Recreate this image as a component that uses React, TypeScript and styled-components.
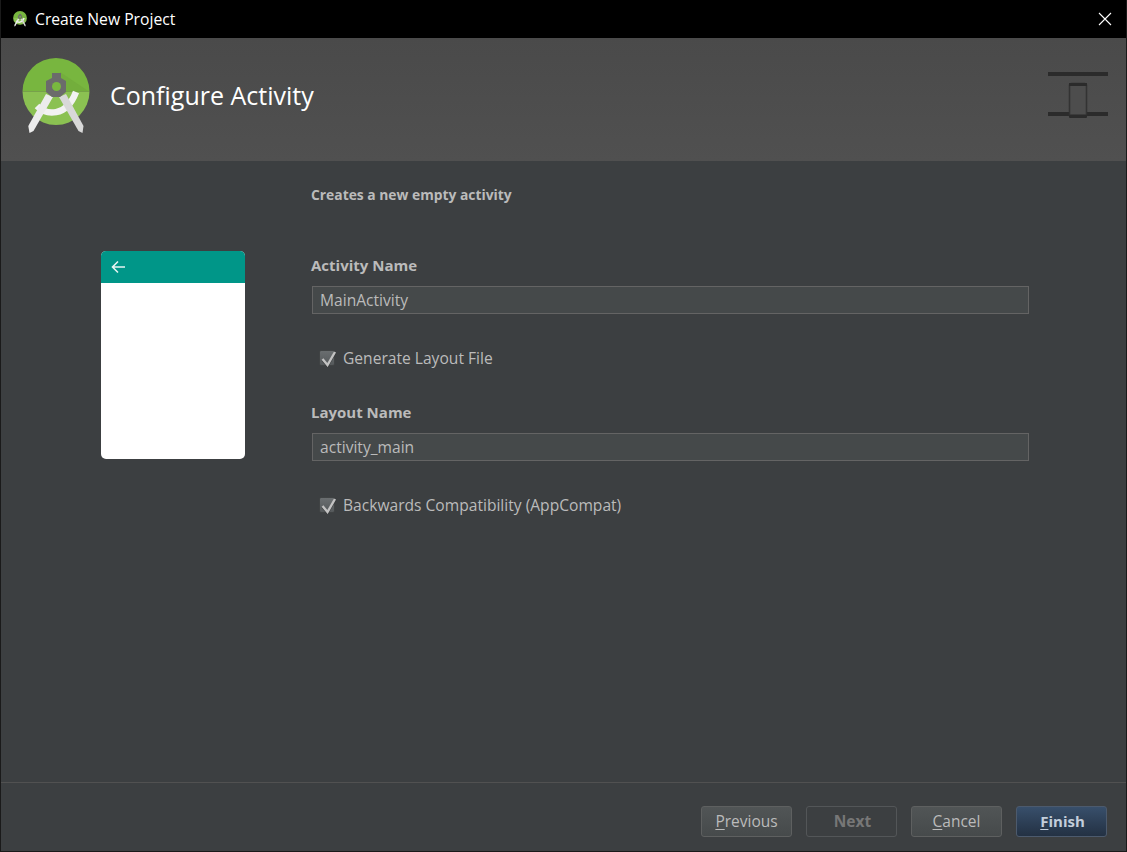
import styled, { createGlobalStyle } from "styled-components";

const Global = createGlobalStyle`
  html, body { margin: 0; padding: 0; background: #3c3f41; }
  body { font-family: "Open Sans", "Noto Sans", sans-serif; }
`;

const Frame = styled.div`
  width: 1127px;
  height: 852px;
  box-sizing: border-box;
  border: 1px solid #1a1a1a;
  border-top: 0;
  display: flex;
  flex-direction: column;
  background: #3c3f41;
  overflow: hidden;
`;

const TitleBar = styled.div`
  height: 38px;
  flex: none;
  background: #000;
  display: flex;
  align-items: center;
  padding: 0 14px 0 12px;
  color: #fff;
  font-size: 15.7px;
`;

const TitleText = styled.span`
  margin-left: 8px;
  flex: 1;
`;

const Header = styled.div`
  height: 123px;
  flex: none;
  background: linear-gradient(180deg, #4a4a4a 0%, #505050 100%);
  display: flex;
  align-items: center;
  padding: 0 18px 10px 21px;
  box-sizing: border-box;
`;

const HeaderLogo = styled.div`
  display: flex;
  margin-top: 3px;
`;

const HeaderTitle = styled.h1`
  margin: 0 0 0 20px;
  flex: 1;
  font-size: 25px;
  font-weight: 400;
  color: #fff;
`;

const Content = styled.div`
  flex: 1;
  display: flex;
  min-height: 0;
`;

const PreviewColumn = styled.div`
  width: 310px;
  flex: none;
  padding: 90px 0 0 100px;
  box-sizing: border-box;
`;

const Phone = styled.div`
  width: 144px;
  height: 208px;
  background: #fff;
  border-radius: 5px;
  overflow: hidden;
`;

const AppBar = styled.div`
  height: 32px;
  background: #009688;
  display: flex;
  align-items: center;
  padding-left: 9px;
`;

const FormColumn = styled.div`
  width: 718px;
  flex: none;
  color: #bbbbbb;
  font-size: 15.6px;
  padding-top: 23px;
`;

const Description = styled.div`
  font-size: 13.85px;
  font-weight: 700;
  line-height: 22px;
  margin-bottom: 48px;
`;

const FieldLabel = styled.div`
  font-size: 15px;
  font-weight: 700;
  line-height: 22px;
  margin-bottom: 10px;
`;

const TextField = styled.div`
  height: 28px;
  box-sizing: border-box;
  margin-left: 1px;
  border: 1px solid #646464;
  background: #45494a;
  padding-left: 7px;
  line-height: 26px;
  color: #bbbbbb;
`;

const CheckRow = styled.div`
  display: flex;
  align-items: center;
  height: 22px;
  margin: 33px 0 32px 8px;
`;

const Box = styled.span`
  width: 16px;
  height: 16px;
  flex: none;
  box-sizing: border-box;
  border: 1px solid #404344;
  border-radius: 2px;
  background: linear-gradient(180deg, #6a6e70, #55595b);
  position: relative;
  margin-right: 8px;
  svg {
    position: absolute;
    left: -1px;
    top: -4px;
  }
`;

const Footer = styled.div`
  height: 69px;
  flex: none;
  border-top: 1px solid #515151;
  display: flex;
  justify-content: flex-end;
  gap: 14px;
  padding: 23px 19px 0 0;
  box-sizing: border-box;
`;

const Button = styled.div<{ $variant?: "default" | "disabled" | "primary" }>`
  width: 91px;
  height: 31px;
  box-sizing: border-box;
  border-radius: 3px;
  font-size: ${(p) => (p.$variant === "primary" ? "15px" : "15.5px")};
  line-height: 29px;
  text-align: center;
  padding-left: ${(p) => (p.$variant === "disabled" || p.$variant === "primary" ? "2px" : "0")};
  border: 1px solid
    ${(p) => (p.$variant === "disabled" ? "#535658" : p.$variant === "primary" ? "#4c5a6d" : "#5e6060")};
  background: ${(p) =>
    p.$variant === "disabled"
      ? "transparent"
      : p.$variant === "primary"
        ? "linear-gradient(180deg, #384f6b, #233143)"
        : "linear-gradient(180deg, #515556, #464a4b)"};
  color: ${(p) => (p.$variant === "disabled" ? "#777777" : p.$variant === "primary" ? "#c3cedb" : "#bbbbbb")};
  font-weight: ${(p) => (p.$variant === "disabled" || p.$variant === "primary" ? 700 : 400)};
  u {
    text-underline-offset: 2px;
  }
`;

const StudioLogo = ({ size }: { size: number }) => (
  <svg width={size} height={size * (76 / 68)} viewBox="0 0 68 76" style={{ flex: "none" }}>
    <path d="M.5 33.5a33.5 33.5 0 0 1 67 0z" fill="#78b63f" />
    <path d="M.5 33.5a33.5 33.5 0 0 0 67 0z" fill="#8bc152" />
    <path d="M38 14 L67 33.5 H42z" fill="#6fa93a" opacity="0.6" />
    <path d="M15 48 C24 57 44 60 54 34" fill="none" stroke="#f2f2f2" strokeWidth="6.5" />
    <path d="M24 36 L6.3 68 L7.5 75 L11.5 73 L31 39 Z" fill="#ececec" />
    <path d="M44 36 L61.5 68 L60.5 75 L56.5 73 L37 39 Z" fill="#d8d8d8" />
    <path d="M30 15h9v5l5 3v11l-6 5h-8l-6-5V23l6-3z" fill="#6b6b6b" />
    <circle cx="34.5" cy="28.5" r="4.5" fill="#79b83f" />
  </svg>
);

const DeviceIcon = () => (
  <svg width="60" height="46" viewBox="0 0 60 46" style={{ flex: "none" }}>
    <rect x="0" y="0" width="60" height="4" fill="#2b2b2b" />
    <rect x="0" y="40" width="21" height="4" fill="#2b2b2b" />
    <rect x="39" y="40" width="21" height="4" fill="#2b2b2b" />
    <rect x="21.5" y="11.5" width="17" height="34" rx="2" fill="#4d4d4d" stroke="#333333" strokeWidth="1.5" />
    <rect x="21" y="11" width="18" height="3" fill="#2b2b2b" />
    <rect x="21" y="42.5" width="18" height="3.5" rx="1.5" fill="#2b2b2b" />
  </svg>
);

const CloseIcon = () => (
  <svg width="14" height="14" viewBox="0 0 14 14" style={{ flex: "none" }}>
    <path d="M1 1l12 12M13 1L1 13" stroke="#fff" strokeWidth="1.1" fill="none" />
  </svg>
);

const BackArrow = () => (
  <svg width="16" height="16" viewBox="0 0 16 16">
    <path d="M15 8H2.5M8 2.5 2.5 8 8 13.5" stroke="#e6f4f2" strokeWidth="1.6" fill="none" />
  </svg>
);

const Check = () => (
  <svg width="18" height="20" viewBox="0 0 18 20">
    <path d="M3.5 12 L8.5 18 L16 5" stroke="#2f3132" strokeWidth="2.6" fill="none" transform="translate(0 .8)" opacity="0.7" />
    <path d="M3.5 12 L8.5 18 L16 5" stroke="#c2c2c2" strokeWidth="2.4" fill="none" />
  </svg>
);

const CheckField = ({ label }: { label: string }) => (
  <CheckRow>
    <Box>
      <Check />
    </Box>
    {label}
  </CheckRow>
);

export default function App() {
  return (
    <>
      <Global />
      <Frame>
        <TitleBar>
          <StudioLogo size={14} />
          <TitleText>Create New Project</TitleText>
          <CloseIcon />
        </TitleBar>
        <Header>
          <HeaderLogo>
            <StudioLogo size={68} />
          </HeaderLogo>
          <HeaderTitle>Configure Activity</HeaderTitle>
          <DeviceIcon />
        </Header>
        <Content>
          <PreviewColumn>
            <Phone>
              <AppBar>
                <BackArrow />
              </AppBar>
            </Phone>
          </PreviewColumn>
          <FormColumn>
            <Description>Creates a new empty activity</Description>
            <FieldLabel>Activity Name</FieldLabel>
            <TextField>MainActivity</TextField>
            <CheckField label="Generate Layout File" />
            <FieldLabel>Layout Name</FieldLabel>
            <TextField>activity_main</TextField>
            <CheckField label="Backwards Compatibility (AppCompat)" />
          </FormColumn>
        </Content>
        <Footer>
          <Button>
            <u>P</u>revious
          </Button>
          <Button $variant="disabled">Next</Button>
          <Button>
            <u>C</u>ancel
          </Button>
          <Button $variant="primary">
            <u>F</u>inish
          </Button>
        </Footer>
      </Frame>
    </>
  );
}
